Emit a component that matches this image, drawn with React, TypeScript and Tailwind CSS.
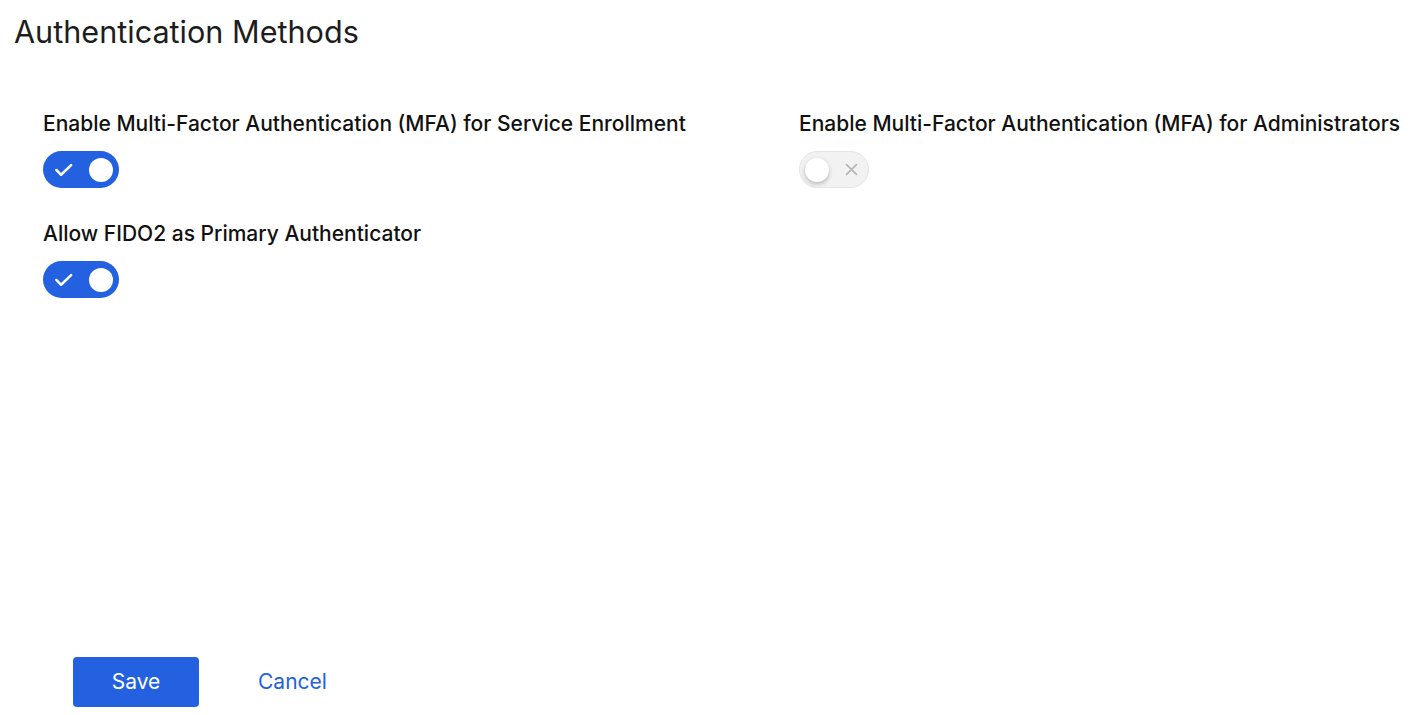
import { useState } from 'react';

function Toggle({ checked, onChange }: { checked: boolean; onChange: () => void }) {
  return (
    <button
      type="button"
      onClick={onChange}
      className={`relative flex h-[37px] items-center rounded-full ${
        checked ? 'w-[76px] bg-[#2361e1]' : 'w-[70px] border border-[#e4e4e4] bg-[#f2f2f2]'
      }`}
    >
      {checked ? (
        <>
          <svg viewBox="0 0 24 24" className="absolute left-[9px] h-[23px] w-[23px]" fill="none" stroke="white" strokeWidth="2.6" strokeLinecap="round" strokeLinejoin="round">
            <path d="M4.5 12.5l5 5L20 7.5" />
          </svg>
          <span className="absolute left-[46px] h-[24px] w-[24px] rounded-full bg-white" />
        </>
      ) : (
        <>
          <span className="absolute left-[5px] h-[24px] w-[24px] rounded-full bg-white shadow-[0_2px_4px_rgba(0,0,0,0.25)]" />
          <svg viewBox="0 0 24 24" className="absolute left-[43px] h-[17px] w-[17px]" fill="none" stroke="#b5b5b5" strokeWidth="2.4" strokeLinecap="round">
            <path d="M5 5l14 14M19 5L5 19" />
          </svg>
        </>
      )}
    </button>
  );
}

export default function App() {
  const [mfaEnrollment, setMfaEnrollment] = useState(true);
  const [mfaAdmins, setMfaAdmins] = useState(false);
  const [fido2, setFido2] = useState(true);

  return (
    <div className="flex h-[715px] flex-col bg-white font-['Inter',sans-serif] text-[#111]">
      <h1 className="pl-[14px] pt-[12px] text-[30.6px] leading-[40px] text-[#1d1d1d]">Authentication Methods</h1>

      <div className="mt-[58px] grid grid-cols-[756px_1fr] gap-y-[32px] pl-[43px]">
        <div>
          <div className="text-[21px] leading-[28px] font-medium">
            Enable Multi-Factor Authentication (MFA) for Service Enrollment
          </div>
          <div className="mt-[13px]">
            <Toggle checked={mfaEnrollment} onChange={() => setMfaEnrollment(!mfaEnrollment)} />
          </div>
        </div>
        <div>
          <div className="text-[21px] leading-[28px] font-medium">
            Enable Multi-Factor Authentication (MFA) for Administrators
          </div>
          <div className="mt-[13px]">
            <Toggle checked={mfaAdmins} onChange={() => setMfaAdmins(!mfaAdmins)} />
          </div>
        </div>
        <div>
          <div className="text-[21px] leading-[28px] font-medium">Allow FIDO2 as Primary Authenticator</div>
          <div className="mt-[13px]">
            <Toggle checked={fido2} onChange={() => setFido2(!fido2)} />
          </div>
        </div>
      </div>

      <div className="mt-auto mb-[8px] flex items-center pl-[73px]">
        <button className="h-[50px] w-[126px] rounded-[4px] bg-[#2361e1] text-[21px] text-white">Save</button>
        <button className="ml-[59px] text-[21px] text-[#2361e1]">Cancel</button>
      </div>
    </div>
  );
}
